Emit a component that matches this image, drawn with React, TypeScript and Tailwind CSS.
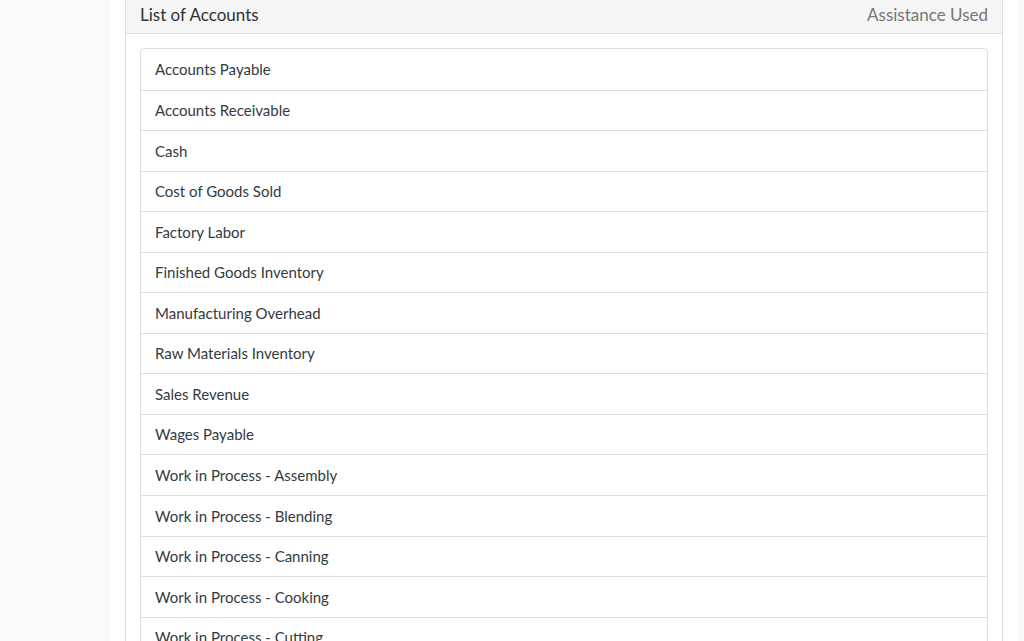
import React from "react";

const accounts = [
  "Accounts Payable",
  "Accounts Receivable",
  "Cash",
  "Cost of Goods Sold",
  "Factory Labor",
  "Finished Goods Inventory",
  "Manufacturing Overhead",
  "Raw Materials Inventory",
  "Sales Revenue",
  "Wages Payable",
  "Work in Process - Assembly",
  "Work in Process - Blending",
  "Work in Process - Canning",
  "Work in Process - Cooking",
  "Work in Process - Cutting",
];

export default function App() {
  return (
    <div
      className="flex h-[641px] w-[1024px] overflow-hidden bg-[#f9f9f9]"
      style={{ fontFamily: "Lato, 'Open Sans', sans-serif" }}
    >
      <div className="w-[111px] shrink-0 bg-[#f9f9f9]" />
      <div className="flex w-[906px] shrink-0 flex-col bg-white px-[14px]">
        <div className="flex flex-1 flex-col border-x border-[#dddddd] bg-white">
          <div className="flex h-[34px] shrink-0 items-center justify-between border-b border-[#dddddd] bg-[#f5f5f5] px-[14px] pb-[4px] text-[17px]">
            <span className="text-[#333333]">List of Accounts</span>
            <span className="text-[#777777]">Assistance Used</span>
          </div>
          <div className="px-[14px] pt-[14px]">
            <ul className="rounded-[4px] border border-[#dddddd]">
              {accounts.map((a, i) => (
                <li
                  key={a}
                  className={`flex h-[40.55px] items-center px-[14px] text-[15px] text-[#333a42] ${
                    i === 0 ? "" : "border-t border-[#dddddd]"
                  }`}
                >
                  {a}
                </li>
              ))}
            </ul>
          </div>
        </div>
      </div>
      <div className="flex-1 bg-[#f9f9f9]" />
    </div>
  );
}
